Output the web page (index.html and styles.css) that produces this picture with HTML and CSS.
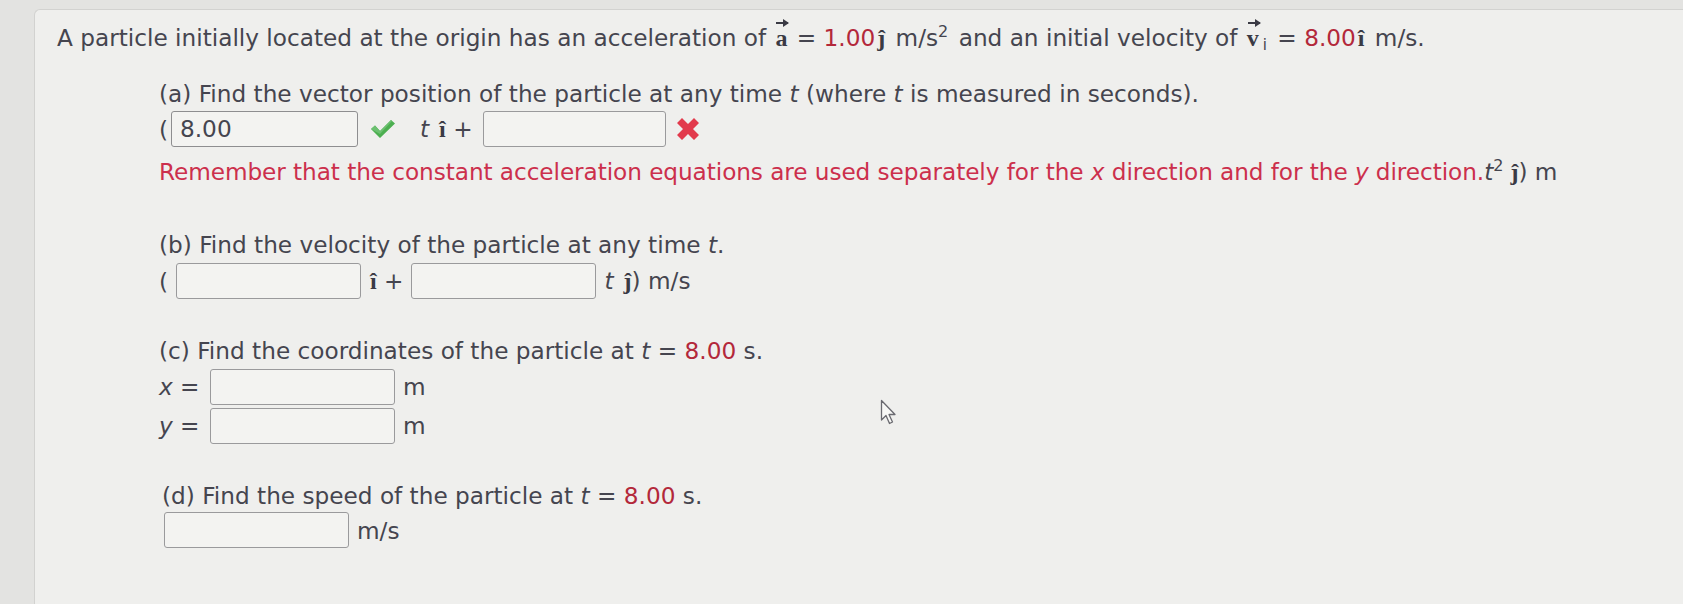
FILE: index.html
```html
<!DOCTYPE html>
<html>
<head>
<meta charset="utf-8">
<link rel="stylesheet" href="styles.css">
</head>
<body>
<div class="card">
  <p class="question">A particle initially located at the origin has an acceleration of <span class="vec">a</span> = <span class="num">1.00</span><span class="unit">ĵ</span> m/s<sup>2</sup> and an initial velocity of <span class="vec">v</span><sub class="subi">i</sub> = <span class="num">8.00</span><span class="unit">î</span> m/s.</p>

  <div class="parts">
    <div class="label la">(a) Find the vector position of the particle at any time <i>t</i> (where <i>t</i> is measured in seconds).</div>
    <div class="row ra">
      <span class="paren">(</span>
      <span class="box b1 filled">8.00</span>
      <svg class="check" width="28" height="22" viewBox="0 0 28 22"><path d="M2 11 L6 7.5 L11 13 L22 2 L26 5.5 L11 20 Z" fill="#4caf50"/><path d="M2 11 L6 7.5 L11 13 L22 2 L23 3 L11 16 Z" fill="#6cc070"/></svg>
      <span class="txt t1"><i class="tt">t</i><span class="unit">î</span> +</span>
      <span class="box b2"></span>
      <svg class="cross" width="28" height="28" viewBox="0 0 28 28"><path d="M3 8 L8 3 L14 9 L20 3 L25 8 L19 14 L25 20 L20 25 L14 19 L8 25 L3 20 L9 14 Z" fill="#e23a4c"/></svg>
    </div>
    <div class="hint"><span class="red">Remember that the constant acceleration equations are used separately for the <i>x</i> direction and for the <i>y</i> direction.</span><i>t</i><sup>2</sup> <span class="unit">ĵ</span>) m</div>

    <div class="label lb">(b) Find the velocity of the particle at any time <i>t</i>.</div>
    <div class="row rb">
      <span class="paren">(</span>
      <span class="box b3"></span>
      <span class="txt t2"><span class="unit">î</span> +</span>
      <span class="box b4"></span>
      <span class="txt t3"><i class="tt">t</i><span class="unit">ĵ</span>) m/s</span>
    </div>

    <div class="label lc">(c) Find the coordinates of the particle at <i>t</i> = <span class="num">8.00</span> s.</div>
    <div class="row rx">
      <span class="var"><i>x</i> =</span>
      <span class="box b5"></span>
      <span class="txt">m</span>
    </div>
    <div class="row ry">
      <span class="var"><i>y</i> =</span>
      <span class="box b5"></span>
      <span class="txt">m</span>
    </div>

    <div class="label ld">(d) Find the speed of the particle at <i>t</i> = <span class="num">8.00</span> s.</div>
    <div class="row rd">
      <span class="box b6"></span>
      <span class="txt">m/s</span>
    </div>
  </div>

  <svg class="cursor" width="18" height="27" viewBox="0 0 18 27"><path d="M1.5 1.5 L1.5 21 L6 16.5 L9.5 24.5 L12.5 23 L9 15.5 L15 15.5 Z" fill="#f7f7f5" stroke="#6a6a70" stroke-width="1.3" stroke-linejoin="round"/></svg>
</div>
</body>
</html>
```

FILE: styles.css
```css
html, body {
  margin: 0;
  padding: 0;
}
body {
  background: #e3e3e1;
  width: 1683px;
  height: 604px;
  overflow: hidden;
  font-family: "DejaVu Sans", Verdana, sans-serif;
  font-size: 23.2px;
  color: #45454f;
}
.card {
  position: relative;
  margin: 9px 0 0 34px;
  height: 595px;
  background: #efefed;
  border-top: 1px solid #d2d2d0;
  border-left: 1px solid #d2d2d0;
  border-radius: 6px 0 0 0;
  padding: 14px 0 0 22px;
  box-sizing: border-box;
}
.question {
  margin: 0;
  line-height: 28px;
  white-space: nowrap;
}
.question .unit { margin: 0 3px 0 2px; }
.question sup { margin-right: 3px; }
.question .vec { margin: 0 2px; }
.question .subi { margin: 0 3px 0 2px; }
.num { color: #b3283a; }
.unit {
  font-family: "Liberation Serif", "Times New Roman", serif;
  font-weight: bold;
  font-size: 24px;
  color: #3a3a44;
}
.vec {
  position: relative;
  font-family: "Liberation Serif", "Times New Roman", serif;
  font-weight: bold;
  font-size: 24px;
  color: #3a3a44;
}
.vec::before {
  content: "";
  position: absolute;
  left: 1px;
  right: -1px;
  top: -3px;
  height: 2px;
  background: #3a3a44;
}
.vec::after {
  content: "";
  position: absolute;
  right: -2px;
  top: -6px;
  border-left: 6px solid #3a3a44;
  border-top: 4px solid transparent;
  border-bottom: 4px solid transparent;
}
sup { font-size: 16px; vertical-align: 9px; line-height: 0; }
.subi { font-size: 15px; vertical-align: -4px; line-height: 0; }
.tt { margin-right: 10px; }
.parts {
  margin-left: 102px;
}
.label {
  line-height: 28px;
  white-space: nowrap;
}
.la { margin-top: 28px; }
.lb { margin-top: 45px; }
.lc { margin-top: 36px; }
.ld { margin-top: 37px; margin-left: 3px; }
.row {
  display: flex;
  align-items: center;
  height: 40px;
  white-space: nowrap;
}
.ra { margin-top: 1px; }
.rb { margin-top: 2px; }
.rx { margin-top: 2px; height: 39px; }
.ry { height: 39px; }
.rd { margin-top: 0; margin-left: 5px; }
.paren { width: 12px; }
.box {
  display: inline-block;
  box-sizing: border-box;
  width: 185px;
  height: 36px;
  border: 1.5px solid #9a9a9c;
  border-radius: 3px;
  background: #f3f3f1;
  line-height: 33px;
  padding-left: 8px;
  color: #45454f;
}
.filled { border-color: #8e8e90; }
.b1 { width: 187px; }
.b2 { width: 183px; margin-left: 10px; }
.b3 { margin-left: 5px; }
.b4 { margin-left: 8px; }
.b5 { width: 185px; }
.b6 { width: 185px; }
.check { margin-left: 11px; }
.txt { margin-left: 8px; }
.txt.t1 { margin-left: 23px; }
.txt.t2 { margin-left: 9px; }
.txt.t3 { margin-left: 8px; }
.cross { margin-left: 8px; }
.var { width: 51px; }
.hint {
  margin-top: 9px;
  line-height: 28px;
  white-space: nowrap;
  letter-spacing: -0.07px;
}
.red { color: #cc2f4c; }
.cursor {
  position: absolute;
  left: 845px;
  top: 389px;
}
```
